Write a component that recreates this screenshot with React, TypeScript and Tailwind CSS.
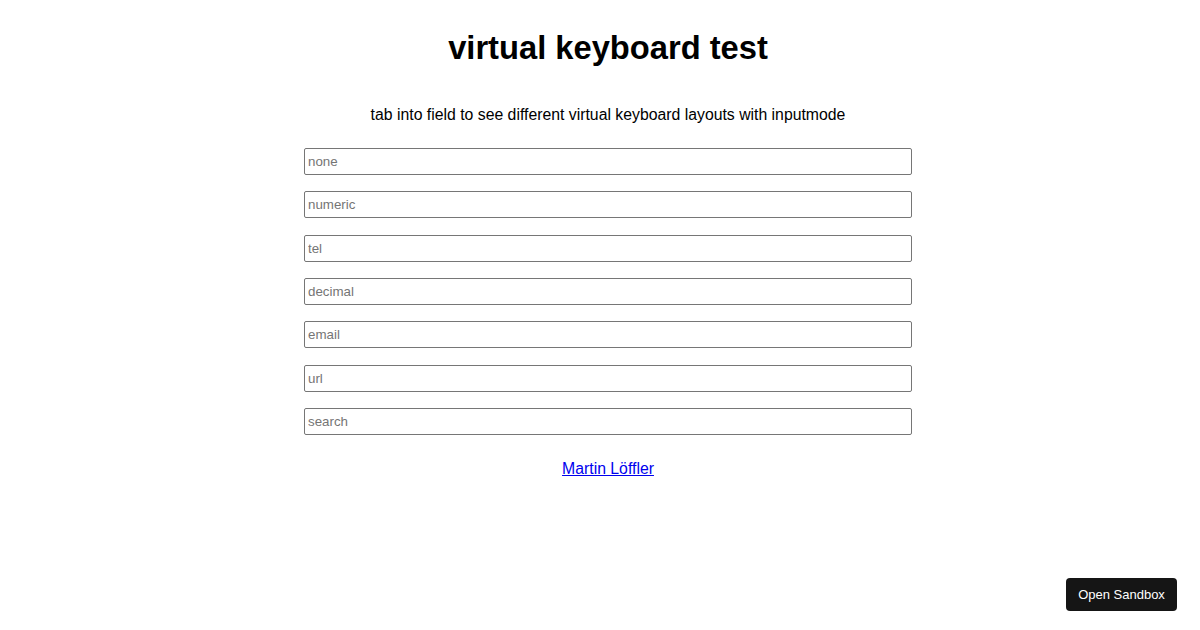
const modes = ["none", "numeric", "tel", "decimal", "email", "url", "search"];

export default function App() {
  return (
    <div className="min-h-screen bg-white text-black font-['Liberation_Sans',Arial,sans-serif]">
      <div className="flex flex-col items-center pl-[16px] pt-[29px]">
        <h1 className="text-[32.7px] font-bold leading-[37px]">virtual keyboard test</h1>
        <p className="mt-[40px] text-[15.8px] leading-[18px]">
          tab into field to see different virtual keyboard layouts with inputmode
        </p>

        <div className="mt-[24px] flex w-[608px] flex-col gap-[16.33px]">
          {modes.map((m) => (
            <input
              key={m}
              inputMode={m as React.HTMLAttributes<HTMLInputElement>["inputMode"]}
              placeholder={m}
              className="h-[27px] w-full rounded-[2px] border border-[#767676] bg-white px-[3px] text-[13.33px] text-black outline-none placeholder:text-[#757575]"
            />
          ))}
        </div>

        <a href="#" className="mt-[25px] text-[15.8px] leading-[18px] text-[#0000ee] underline">
          Martin Löffler
        </a>
      </div>

      <button className="fixed bottom-[19px] right-[23px] h-[33px] w-[111px] rounded-[4px] bg-[#151515] text-[13px] text-white">
        Open Sandbox
      </button>
    </div>
  );
}
